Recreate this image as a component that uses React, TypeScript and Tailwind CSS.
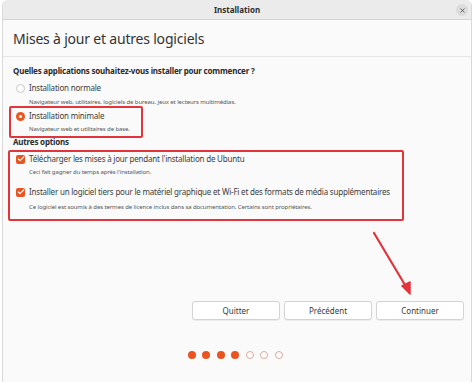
import { Check, X } from "lucide-react";

/** Petite pastille radio */
function Radio({ checked }: { checked?: boolean }) {
  return checked ? (
    <span className="flex h-[9px] w-[9px] shrink-0 items-center justify-center rounded-full bg-[#e95420]">
      <span className="h-[3px] w-[3px] rounded-full bg-white" />
    </span>
  ) : (
    <span className="h-[9px] w-[9px] shrink-0 rounded-full border border-[#c8c8c8] bg-white" />
  );
}

function CheckBox() {
  return (
    <span className="flex h-[9px] w-[9px] shrink-0 items-center justify-center rounded-[2px] bg-[#e95420]">
      <Check size={8} strokeWidth={3.5} className="text-white" />
    </span>
  );
}

export default function App() {
  const steps = [true, true, true, true, false, false, false];

  return (
    <div className="h-[382px] w-[474px] overflow-hidden bg-white font-['Noto_Sans',sans-serif] text-[#3c3c3c]">
      <div className="relative ml-[2px] flex h-[382px] w-[470px] flex-col overflow-hidden rounded-t-[6px] border-x border-[#d9d9d9] bg-[#fafafa]">
        <div className="relative flex h-[20px] shrink-0 items-center justify-center border-b border-[#d4d4d4] bg-[#ebebeb]">
          <span className="text-[8px] font-bold text-[#2e2e2e]">Installation</span>
          <span className="absolute right-[3px] top-[4px] flex h-[12px] w-[12px] items-center justify-center rounded-full bg-[#dcdcdc]">
            <X size={7} strokeWidth={3} className="text-[#555]" />
          </span>
        </div>

        <div className="flex h-[37px] shrink-0 items-center border-b border-[#e6e6e6] pl-[10px]">
          <h1 className="text-[14px] tracking-[-0.2px] text-[#333]">Mises à jour et autres logiciels</h1>
        </div>

        <div className="flex flex-col pl-[6px] pt-[8px]">
          <div className="pl-[4px] text-[8px] font-bold tracking-[-0.2px] text-[#2b2b2b]">
            Quelles applications souhaitez-vous installer pour commencer ?
          </div>

          <div className="mt-[5px] flex items-center gap-[4px] pl-[7px] text-[8px] tracking-[-0.2px]">
            <Radio />
            <span>Installation normale</span>
          </div>
          <div className="mt-[4px] pl-[20px] text-[6px] tracking-[-0.1px] text-[#555]">
            Navigateur web, utilitaires, logiciels de bureau, jeux et lecteurs multimédias.
          </div>

          <div className="-mt-[1px] w-[134px] rounded-[2px] border-2 border-[#e2353b] pb-[2px] pl-[5px] pt-[2px]">
            <div className="flex items-center gap-[4px] text-[8px] tracking-[-0.2px]">
              <Radio checked />
              <span>Installation minimale</span>
            </div>
            <div className="mt-[3px] pl-[13px] text-[6px] tracking-[-0.1px] text-[#555]">
              Navigateur web et utilitaires de base.
            </div>
          </div>

          <div className="-mt-[1px] pl-[4px] text-[8px] leading-[10px] font-bold tracking-[-0.2px] text-[#2b2b2b]">
            Autres options
          </div>

          <div className="mt-[3px] w-[396px] -translate-x-[1px] rounded-[2px] border-2 border-[#e2353b] pb-[7px] pl-[6px] pt-[1px]">
            <div className="flex items-center gap-[4px] text-[8px] tracking-[-0.2px]">
              <CheckBox />
              <span>Télécharger les mises à jour pendant l'installation de Ubuntu</span>
            </div>
            <div className="mt-[3px] pl-[13px] text-[6px] tracking-[-0.1px] text-[#555]">
              Ceci fait gagner du temps après l'installation.
            </div>
            <div className="mt-[9px] flex items-center gap-[4px] text-[8px] tracking-[-0.2px]">
              <CheckBox />
              <span>Installer un logiciel tiers pour le matériel graphique et Wi-Fi et des formats de média supplémentaires</span>
            </div>
            <div className="mt-[5px] pl-[13px] text-[6px] tracking-[-0.1px] text-[#555]">
              Ce logiciel est soumis à des termes de licence inclus dans sa documentation. Certains sont propriétaires.
            </div>
          </div>
        </div>

        <div className="flex-1" />

        <div className="flex justify-end gap-[4px] pr-[7px]">
          {["Quitter", "Précédent", "Continuer"].map((label) => (
            <button
              key={label}
              className="h-[19px] w-[88px] rounded-[3px] border border-[#d2d2d2] bg-white text-[8px] text-[#3a3a3a] shadow-[0_1px_0_rgba(0,0,0,0.05)]"
            >
              {label}
            </button>
          ))}
        </div>

        <div className="flex h-[62px] items-center justify-center gap-[6.5px] pr-[4px] pt-[8px]">
          {steps.map((done, i) => (
            <span
              key={i}
              className={
                done
                  ? "h-[8px] w-[8px] rounded-full bg-[#e95420]"
                  : "h-[8px] w-[8px] rounded-full border border-[#e2a79a] bg-white"
              }
            />
          ))}
        </div>

        {/* flèche d'annotation */}
        <svg className="absolute left-[368px] top-[230px]" width="44" height="68" viewBox="0 0 44 68">
          <line x1="3" y1="3" x2="37" y2="60" stroke="#e2353b" strokeWidth="2.2" strokeLinecap="round" />
          <path d="M31 56 L39 64 L39 52 Z" fill="#e2353b" stroke="#e2353b" strokeWidth="1.5" strokeLinejoin="round" />
        </svg>
      </div>
    </div>
  );
}
